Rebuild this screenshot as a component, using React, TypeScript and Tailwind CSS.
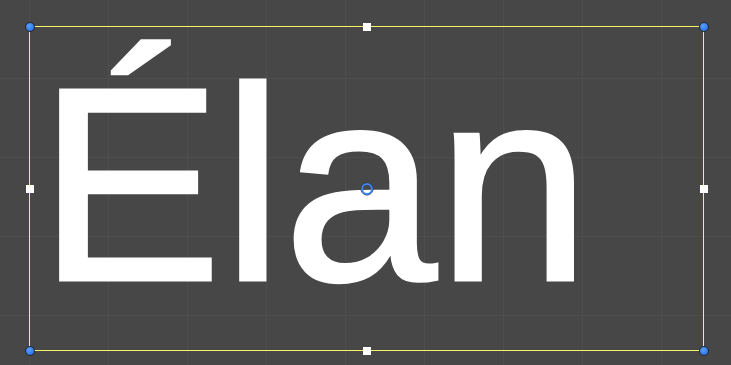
import React from 'react';

// white square handle on the middle of each rect edge
const EdgeHandle: React.FC<{ className: string }> = ({ className }) => (
  <div className={'absolute w-[8px] h-[8px] bg-white ' + className} />
);

// blue anchor dot on each corner
const CornerHandle: React.FC<{ className: string }> = ({ className }) => (
  <div
    className={
      'absolute w-[10px] h-[10px] rounded-full border border-[#1d2a3a] bg-[radial-gradient(circle_at_40%_35%,#5aa0ff,#1f63d1)] ' +
      className
    }
  />
);

export default function App() {
  return (
    <div className="w-[731px] h-[365px] overflow-hidden bg-[#474747] pt-[26px] pl-[29px] bg-[linear-gradient(to_right,#4e4e4e_1px,transparent_1px),linear-gradient(to_bottom,#4e4e4e_1px,transparent_1px)] bg-[size:79px_79px] bg-[position:29px_78px]">
      {/* rect transform of the text object */}
      <div className="relative w-[675px] h-[325px] border border-[#f4f46a]">
        <div className="ml-[8px] pt-[19px] whitespace-nowrap text-white font-['Liberation_Sans',Arial,sans-serif] text-[276px] leading-[276px] [-webkit-text-stroke:3px_white]">
          Élan
        </div>

        <EdgeHandle className="left-1/2 -translate-x-1/2 -top-[4.5px]" />
        <EdgeHandle className="left-1/2 -translate-x-1/2 -bottom-[4.5px]" />
        <EdgeHandle className="top-1/2 -translate-y-1/2 -left-[4.5px]" />
        <EdgeHandle className="top-1/2 -translate-y-1/2 -right-[4.5px]" />

        <CornerHandle className="-left-[5.5px] -top-[5.5px]" />
        <CornerHandle className="-right-[5.5px] -top-[5.5px]" />
        <CornerHandle className="-left-[5.5px] -bottom-[5.5px]" />
        <CornerHandle className="-right-[5.5px] -bottom-[5.5px]" />

        {/* pivot */}
        <svg className="absolute left-1/2 top-1/2 -translate-x-1/2 -translate-y-1/2" width={16} height={16}>
          <circle cx={8} cy={8} r={6} fill="none" stroke="#1d2a3a" strokeWidth={1} />
          <circle cx={8} cy={8} r={5} fill="none" stroke="#3c86ee" strokeWidth={2} />
        </svg>
      </div>
    </div>
  );
}
